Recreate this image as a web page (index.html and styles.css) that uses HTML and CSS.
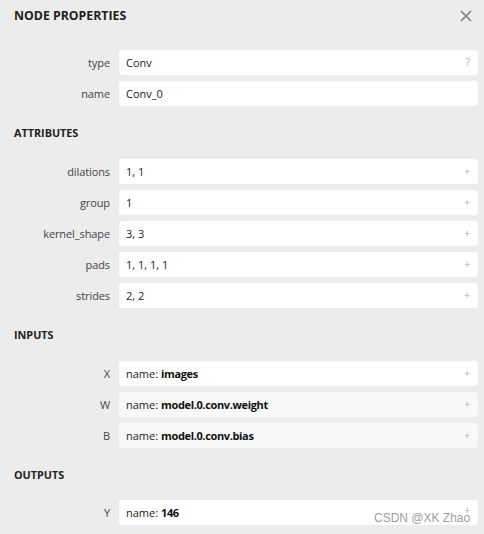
FILE: index.html
```html
<!DOCTYPE html>
<html>
<head>
<meta charset="utf-8">
<link rel="stylesheet" href="styles.css">
</head>
<body>
<div class="sidebar">
  <div class="title-bar">
    <span class="title">NODE PROPERTIES</span>
    <svg class="close" width="12" height="12" viewBox="0 0 12 12"><path d="M1 1 L11 11 M11 1 L1 11" stroke="#808080" stroke-width="1.6" fill="none"/></svg>
  </div>
  <div class="rows first">
    <div class="label">type</div><div class="value">Conv<span class="btn">?</span></div>
    <div class="label">name</div><div class="value">Conv_0</div>
  </div>
  <div class="section">ATTRIBUTES</div>
  <div class="rows">
    <div class="label">dilations</div><div class="value">1, 1<span class="btn">+</span></div>
    <div class="label">group</div><div class="value">1<span class="btn">+</span></div>
    <div class="label">kernel_shape</div><div class="value">3, 3<span class="btn">+</span></div>
    <div class="label">pads</div><div class="value">1, 1, 1, 1<span class="btn">+</span></div>
    <div class="label">strides</div><div class="value">2, 2<span class="btn">+</span></div>
  </div>
  <div class="section">INPUTS</div>
  <div class="rows">
    <div class="label">X</div><div class="value">name: <b>images</b><span class="btn">+</span></div>
    <div class="label">W</div><div class="value init">name: <b>model.0.conv.weight</b><span class="btn">+</span></div>
    <div class="label">B</div><div class="value init">name: <b>model.0.conv.bias</b><span class="btn">+</span></div>
  </div>
  <div class="section short">OUTPUTS</div>
  <div class="rows">
    <div class="label">Y</div><div class="value">name: <b>146</b><span class="btn top">+</span></div>
  </div>
  <div class="watermark">CSDN @XK Zhao</div>
</div>
</body>
</html>
```
FILE: styles.css
```css
html, body {
  margin: 0;
  padding: 0;
  background: #ececec;
}
body {
  font-family: "Open Sans", "Noto Sans", sans-serif;
  font-size: 11px;
  color: #333;
}
.sidebar {
  position: relative;
  width: 484px;
  height: 534px;
  overflow: hidden;
}
.title-bar {
  height: 31px;
  display: flex;
  align-items: center;
  justify-content: space-between;
  padding: 0 12px 0 14px;
}
.title {
  font-weight: 700;
  font-size: 12.3px;
  color: #222;
}
.close {
  display: block;
}
.rows {
  display: grid;
  grid-template-columns: 96px 1fr;
  column-gap: 9px;
  row-gap: 6px;
  padding: 0 6px 0 14px;
}
.rows.first {
  margin-top: 19px;
}
.label {
  height: 25px;
  line-height: 25px;
  text-align: right;
  color: #444;
  letter-spacing: -0.1px;
}
.value {
  height: 25px;
  line-height: 25px;
  background: #fff;
  border-radius: 3px;
  padding: 0 7px;
  display: flex;
  align-items: center;
  color: #222;
  white-space: pre;
}
.value.init {
  background: #f8f8f8;
}
.value b {
  font-weight: 700;
  color: #111;
  letter-spacing: -0.35px;
}
.btn {
  margin-left: auto;
  color: #aaa;
  font-size: 10px;
  padding-right: 1px;
}
.btn.top {
  align-self: flex-start;
  line-height: 20px;
}
.section {
  height: 53px;
  display: flex;
  align-items: center;
  padding-left: 14px;
  font-weight: 700;
  font-size: 10.8px;
  color: #222;
}
.section.short {
  height: 52px;
}
.watermark {
  position: absolute;
  left: 374px;
  top: 511px;
  font-family: "Liberation Sans", Arial, sans-serif;
  font-size: 12px;
  line-height: 14px;
  color: rgba(110, 110, 110, 0.7);
  white-space: nowrap;
}
```
